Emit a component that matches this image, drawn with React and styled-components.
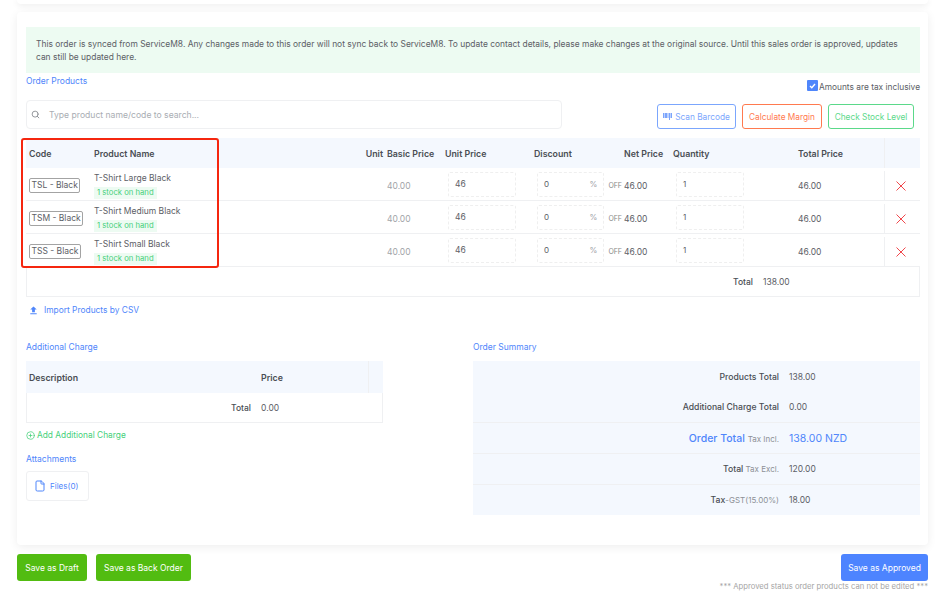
import styled, { createGlobalStyle } from 'styled-components';
import { Search, File, CirclePlus } from 'lucide-react';
import { MdFileUpload } from 'react-icons/md';

const BLUE = '#4f86fb';
const GREEN = '#45d07a';
const TEXT = '#5c6066';
const HEAD_BG = '#f4f8fe';
const LINE = '#eff0f2';
const COLUMNS = '65px 200px 92px 58px 89px 92px 47px 125px 90px 36px';

const GlobalStyle = createGlobalStyle`
  html, body {
    margin: 0;
    background: #fff;
    font-family: Inter, "Liberation Sans", sans-serif;
    font-size: 8.5px;
    color: ${TEXT};
  }
  * { box-sizing: border-box; }
`;

const Page = styled.div`
  width: 941px;
  height: 597px;
  padding: 0 13px 0 17px;
  overflow: hidden;
`;

const TopCard = styled.div`
  height: 4px;
  background: #fff;
  border-radius: 0 0 4px 4px;
  box-shadow: 0 1px 6px rgba(0, 0, 0, 0.1);
`;

const MainCard = styled.div`
  height: 533px;
  margin-top: 8px;
  padding: 15px 8px 0 9px;
  background: #fff;
  border-radius: 4px;
  box-shadow: 0 2px 10px rgba(0, 0, 0, 0.07);
`;

const Notice = styled.div`
  height: 46px;
  padding: 11px 10px 0;
  background: #edfbf2;
  font-size: 8.43px;
  line-height: 12.5px;
`;

const TitleRow = styled.div`
  display: flex;
  justify-content: space-between;
  height: 27px;
  padding-top: 2px;
`;

const SectionTitle = styled.div`
  color: ${BLUE};
  line-height: 12px;
`;

const TaxOption = styled.label`
  display: flex;
  align-items: flex-start;
  gap: 1px;
  padding-top: 5px;
  line-height: 14px;
  font-size: 8.35px;
`;

const CheckBox = styled.span`
  display: flex;
  align-items: center;
  justify-content: center;
  width: 11px;
  height: 11px;
  border-radius: 1px;
  background: ${BLUE};
`;

const ToolRow = styled.div`
  display: flex;
  justify-content: space-between;
  align-items: flex-end;
  height: 29px;
  padding-right: 6px;
`;

const SearchBox = styled.div`
  display: flex;
  align-items: center;
  gap: 9px;
  width: 536px;
  height: 29px;
  padding-left: 4px;
  border: 1px solid ${LINE};
  border-radius: 4px;
  color: #a9adb3;
  font-size: 8.6px;
`;

const ToolButtons = styled.div`
  display: flex;
  gap: 6px;
`;

const ToolButton = styled.button`
  display: flex;
  align-items: center;
  justify-content: center;
  gap: 3px;
  width: ${(p) => p.$width}px;
  height: 25px;
  padding: 0;
  border: 1px solid ${(p) => p.$color};
  border-radius: 3px;
  background: #fff;
  color: ${(p) => p.$color};
  font: inherit;
  font-size: 8.3px;
`;

const TableWrap = styled.div`
  position: relative;
  margin-top: 9px;
`;

const Highlight = styled.div`
  position: absolute;
  left: -5px;
  top: 0;
  width: 198px;
  height: 130px;
  border: 2px solid #f5260f;
  border-radius: 3px;
  pointer-events: none;
`;

const HeadRow = styled.div`
  display: grid;
  grid-template-columns: ${COLUMNS};
  align-items: center;
  height: 30px;
  background: ${HEAD_BG};
  font-size: 8.8px;
  font-weight: 600;
  color: #4a4e54;
`;

const ProductRow = styled.div`
  display: grid;
  grid-template-columns: ${COLUMNS};
  align-items: center;
  height: 33px;
  padding-top: 3px;
  border-bottom: 1px solid ${LINE};
`;

const Cell = styled.div`
  padding-left: ${(p) => p.$pad || 0}px;
  text-align: ${(p) => p.$align || 'left'};
  color: ${(p) => p.$color || 'inherit'};
  white-space: nowrap;
`;

const ActionCell = styled.div`
  display: flex;
  align-items: center;
  justify-content: center;
  align-self: stretch;
  padding-right: 3px;
  border-left: 1px solid ${LINE};
`;

const CodeTag = styled.span`
  display: inline-block;
  padding: 0 1.5px;
  height: 15px;
  line-height: 13px;
  border: 1px solid #a3a3a3;
  border-radius: 2px;
`;

const ProductName = styled.div`
  line-height: 12px;
  margin-bottom: 3px;
`;

const StockBadge = styled.span`
  display: inline-block;
  height: 12px;
  padding: 0 3px;
  line-height: 12px;
  background: #edfbf2;
  color: ${GREEN};
  font-size: 7.7px;
`;

const DashedInput = styled.div`
  display: flex;
  justify-content: space-between;
  width: 68px;
  height: 25px;
  margin-top: -2px;
  padding: 0 6px;
  line-height: 23px;
  border: 1px dashed #efefef;
  border-radius: 2px;
  font-size: ${(p) => p.$size || 8.5}px;
`;

const Percent = styled.span`
  color: #a2a4a8;
`;

const DiscountCell = styled.div`
  display: flex;
  align-items: center;
  gap: 4px;
  padding-left: 7px;
`;

const OffText = styled.span`
  font-size: 7px;
  color: #888;
`;

const TotalRow = styled.div`
  display: grid;
  grid-template-columns: ${(p) => p.$label}px 1fr;
  column-gap: 10px;
  align-items: center;
  height: 30px;
  border: 1px solid ${LINE};
  border-top: 0;
`;

const TotalLabel = styled.div`
  text-align: right;
  font-weight: 500;
  color: #4a4e54;
`;

const ImportLink = styled.div`
  display: flex;
  align-items: center;
  gap: 5px;
  margin-top: 7px;
  padding-left: 2px;
  height: 12px;
  color: ${BLUE};
  font-size: 8.4px;
`;

const Columns = styled.div`
  display: flex;
  justify-content: space-between;
  margin-top: 25px;
`;

const LeftColumn = styled.div`
  width: 357px;
`;

const RightColumn = styled.div`
  width: 447px;
`;

const ChargeHead = styled.div`
  display: grid;
  grid-template-columns: 235px 107px 1fr;
  align-items: center;
  height: 32px;
  margin-top: 8px;
  background: ${HEAD_BG};
  font-size: 8.8px;
  font-weight: 600;
  color: #4a4e54;
`;

const HeadDivider = styled.div`
  height: 100%;
  border-left: 1px solid ${LINE};
`;

const AddLink = styled.div`
  display: flex;
  align-items: center;
  gap: 2px;
  height: 12px;
  margin-top: 6px;
  color: ${GREEN};
  font-size: 8.35px;
`;

const AttachTitle = styled(SectionTitle)`
  margin-top: 12px;
`;

const FilesBox = styled.div`
  display: flex;
  align-items: center;
  gap: 4px;
  width: 63px;
  height: 30px;
  margin-top: 6px;
  padding-left: 7px;
  border: 1px solid ${LINE};
  border-radius: 3px;
  color: ${BLUE};
  font-size: 8px;
`;

const Summary = styled.div`
  margin-top: 8px;
  background: ${HEAD_BG};
`;

const SummaryRow = styled.div`
  display: grid;
  grid-template-columns: 306px 1fr;
  column-gap: 10px;
  align-items: center;
  height: ${(p) => p.$height}px;
  border-bottom: ${(p) => (p.$line ? `1px solid ${LINE}` : '0')};
`;

const SummaryLabel = styled.div`
  text-align: right;
  font-weight: 500;
  color: ${(p) => p.$color || '#4a4e54'};
  font-size: ${(p) => p.$size || 8.65}px;
`;

const SummaryValue = styled.div`
  color: ${(p) => p.$color || 'inherit'};
  font-size: ${(p) => p.$size || 8.5}px;
`;

const Muted = styled.span`
  font-size: 8px;
  font-weight: 400;
  color: #8d9096;
`;

const Footer = styled.div`
  display: flex;
  justify-content: space-between;
  margin-top: 9px;
`;

const FooterGroup = styled.div`
  display: flex;
  gap: 9px;
`;

const SaveButton = styled.button`
  width: ${(p) => p.$width}px;
  height: 27px;
  padding: 0;
  border: 0;
  border-radius: 3px;
  background: ${(p) => p.$bg};
  color: #fff;
  font: inherit;
  font-size: 8.5px;
`;

const FootNote = styled.div`
  margin-top: 1px;
  text-align: right;
  font-size: 7.7px;
  color: #a5a5a5;
`;

const products = [
  { code: 'TSL - Black', name: 'T-Shirt Large Black' },
  { code: 'TSM - Black', name: 'T-Shirt Medium Black' },
  { code: 'TSS - Black', name: 'T-Shirt Small Black' },
];

const BarcodeIcon = () => (
  <svg width="9" height="7" viewBox="0 0 9 7" fill={BLUE} opacity="0.75">
    <path d="M0 0h1.5v5H0zM2 0h2v5H2zM4.5 0h1v5h-1zM6 0h1v7H6zM7.5 0H9v5H7.5z" />
  </svg>
);

const RemoveIcon = () => (
  <svg width="10" height="10" viewBox="0 0 10 10" stroke="#f0474b" strokeWidth="1">
    <path d="M0.5 0.5L9.5 9.5M9.5 0.5L0.5 9.5" />
  </svg>
);

const CheckMark = () => (
  <svg width="7" height="6" viewBox="0 0 7 6" fill="none" stroke="#fff" strokeWidth="1.4">
    <path d="M1 3l1.8 1.8L6 1" />
  </svg>
);

export default function App() {
  return (
    <Page>
      <GlobalStyle />
      <TopCard />
      <MainCard>
        <Notice>
          This order is synced from ServiceM8. Any changes made to this order will not sync back to ServiceM8. To update contact details, please make changes at the original source. Until this sales order is approved, updates can still be updated here.
        </Notice>
        <TitleRow>
          <SectionTitle>Order Products</SectionTitle>
          <TaxOption>
            <CheckBox><CheckMark /></CheckBox>
            Amounts are tax inclusive
          </TaxOption>
        </TitleRow>
        <ToolRow>
          <SearchBox>
            <Search size={9} color="#8a8d92" strokeWidth={2.4} />
            Type product name/code to search...
          </SearchBox>
          <ToolButtons>
            <ToolButton $width={79} $color="#7ba6fd"><BarcodeIcon />Scan Barcode</ToolButton>
            <ToolButton $width={80} $color="#ff7a4f">Calculate Margin</ToolButton>
            <ToolButton $width={86} $color="#5bd98a">Check Stock Level</ToolButton>
          </ToolButtons>
        </ToolRow>
        <TableWrap>
          <HeadRow>
            <Cell $pad={3}>Code</Cell>
            <Cell $pad={3}>Product Name</Cell>
            <Cell $align="right">Unit</Cell>
            <Cell $pad={4}>Basic Price</Cell>
            <Cell $pad={4}>Unit Price</Cell>
            <Cell $pad={4}>Discount</Cell>
            <Cell $pad={2}>Net Price</Cell>
            <Cell $pad={4}>Quantity</Cell>
            <Cell $pad={4}>Total Price</Cell>
            <ActionCell />
          </HeadRow>
          {products.map((item) => (
            <ProductRow key={item.code}>
              <Cell $pad={3}><CodeTag>{item.code}</CodeTag></Cell>
              <Cell $pad={3}>
                <ProductName>{item.name}</ProductName>
                <StockBadge>1 stock on hand</StockBadge>
              </Cell>
              <Cell />
              <Cell $pad={4} $color="#a2a4a8">40.00</Cell>
              <Cell $pad={7}><DashedInput>46</DashedInput></Cell>
              <DiscountCell>
                <DashedInput $size={8}>0<Percent>%</Percent></DashedInput>
                <OffText>OFF</OffText>
              </DiscountCell>
              <Cell $pad={2}>46.00</Cell>
              <Cell $pad={7}><DashedInput $size={8}>1</DashedInput></Cell>
              <Cell $pad={4}>46.00</Cell>
              <ActionCell><RemoveIcon /></ActionCell>
            </ProductRow>
          ))}
          <TotalRow $label={726}>
            <TotalLabel>Total</TotalLabel>
            <div>138.00</div>
          </TotalRow>
          <Highlight />
        </TableWrap>
        <ImportLink>
          <MdFileUpload size={11} />
          Import Products by CSV
        </ImportLink>
        <Columns>
          <LeftColumn>
            <SectionTitle>Additional Charge</SectionTitle>
            <ChargeHead>
              <Cell $pad={3}>Description</Cell>
              <Cell>Price</Cell>
              <HeadDivider />
            </ChargeHead>
            <TotalRow $label={224}>
              <TotalLabel>Total</TotalLabel>
              <div>0.00</div>
            </TotalRow>
            <AddLink>
              <CirclePlus size={9} />
              Add Additional Charge
            </AddLink>
            <AttachTitle>Attachments</AttachTitle>
            <FilesBox>
              <File size={12} />
              Files(0)
            </FilesBox>
          </LeftColumn>
          <RightColumn>
            <SectionTitle>Order Summary</SectionTitle>
            <Summary>
              <SummaryRow $height={31}>
                <SummaryLabel>Products Total</SummaryLabel>
                <SummaryValue>138.00</SummaryValue>
              </SummaryRow>
              <SummaryRow $height={31} $line>
                <SummaryLabel>Additional Charge Total</SummaryLabel>
                <SummaryValue>0.00</SummaryValue>
              </SummaryRow>
              <SummaryRow $height={31} $line>
                <SummaryLabel $color={BLUE} $size={10.5}>Order Total <Muted>Tax Incl.</Muted></SummaryLabel>
                <SummaryValue $color={BLUE} $size={10.5}>138.00 NZD</SummaryValue>
              </SummaryRow>
              <SummaryRow $height={31} $line>
                <SummaryLabel>Total <Muted>Tax Excl.</Muted></SummaryLabel>
                <SummaryValue>120.00</SummaryValue>
              </SummaryRow>
              <SummaryRow $height={30}>
                <SummaryLabel>Tax<Muted>-GST(15.00%)</Muted></SummaryLabel>
                <SummaryValue>18.00</SummaryValue>
              </SummaryRow>
            </Summary>
          </RightColumn>
        </Columns>
      </MainCard>
      <Footer>
        <FooterGroup>
          <SaveButton $width={70} $bg="#52bc11">Save as Draft</SaveButton>
          <SaveButton $width={95} $bg="#52bc11">Save as Back Order</SaveButton>
        </FooterGroup>
        <SaveButton $width={87} $bg="#4d84ff">Save as Approved</SaveButton>
      </Footer>
      <FootNote>*** Approved status order products can not be edited ***</FootNote>
    </Page>
  );
}
